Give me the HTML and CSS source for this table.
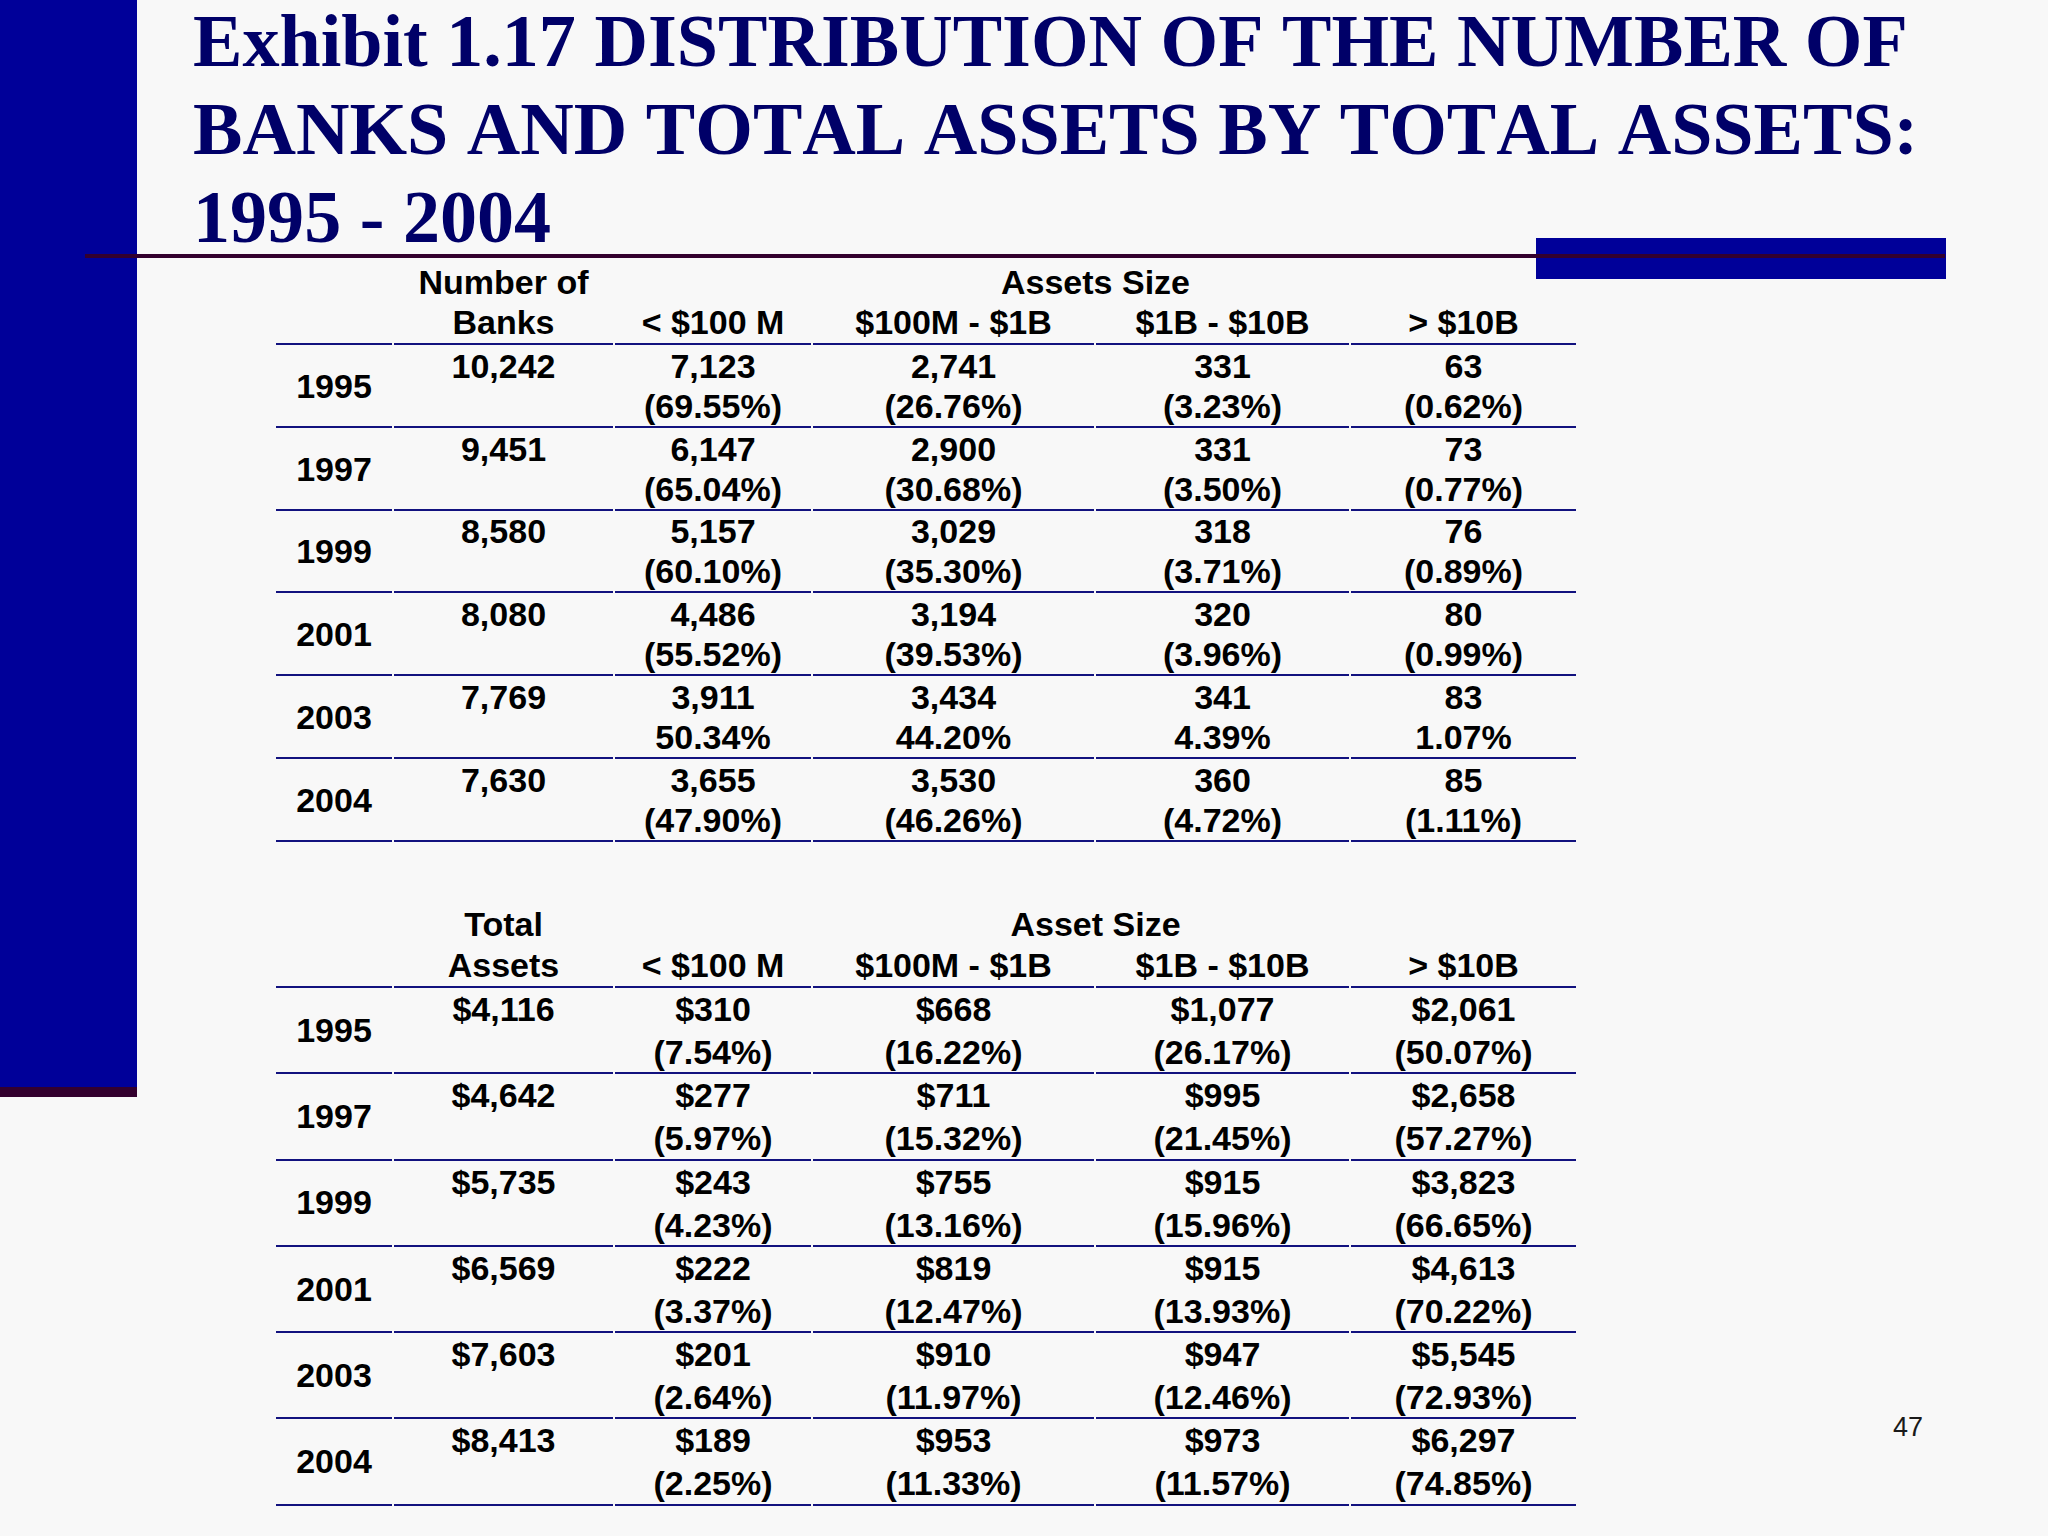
FILE: index.html
```html
<!DOCTYPE html>
<html>
<head>
<meta charset="utf-8">
<link rel="stylesheet" href="styles.css">
</head>
<body>
<div class="slide">
  <div class="side-bar"></div>
  <div class="accent-block"></div>
  <div class="rule"></div>
  <div class="content">
    <h1 class="title">Exhibit 1.17 DISTRIBUTION OF THE NUMBER OF<br>BANKS AND TOTAL ASSETS BY TOTAL ASSETS:<br>1995 - 2004</h1>

    <div class="table t1">
      <div class="hc year-h"></div>
      <div class="hc lead-h">Number of<br>Banks</div>
      <div class="group-h">Assets Size</div>
      <div class="hc sub-h">&lt; $100 M</div>
      <div class="hc sub-h">$100M - $1B</div>
      <div class="hc sub-h">$1B - $10B</div>
      <div class="hc sub-h">&gt; $10B</div>

      <div class="c yr">1995</div><div class="c">10,242</div><div class="c">7,123<br>(69.55%)</div><div class="c">2,741<br>(26.76%)</div><div class="c">331<br>(3.23%)</div><div class="c">63<br>(0.62%)</div>
      <div class="c yr">1997</div><div class="c">9,451</div><div class="c">6,147<br>(65.04%)</div><div class="c">2,900<br>(30.68%)</div><div class="c">331<br>(3.50%)</div><div class="c">73<br>(0.77%)</div>
      <div class="c yr">1999</div><div class="c">8,580</div><div class="c">5,157<br>(60.10%)</div><div class="c">3,029<br>(35.30%)</div><div class="c">318<br>(3.71%)</div><div class="c">76<br>(0.89%)</div>
      <div class="c yr">2001</div><div class="c">8,080</div><div class="c">4,486<br>(55.52%)</div><div class="c">3,194<br>(39.53%)</div><div class="c">320<br>(3.96%)</div><div class="c">80<br>(0.99%)</div>
      <div class="c yr">2003</div><div class="c">7,769</div><div class="c">3,911<br>50.34%</div><div class="c">3,434<br>44.20%</div><div class="c">341<br>4.39%</div><div class="c">83<br>1.07%</div>
      <div class="c yr">2004</div><div class="c">7,630</div><div class="c">3,655<br>(47.90%)</div><div class="c">3,530<br>(46.26%)</div><div class="c">360<br>(4.72%)</div><div class="c">85<br>(1.11%)</div>
    </div>

    <div class="table t2">
      <div class="hc year-h"></div>
      <div class="hc lead-h">Total<br>Assets</div>
      <div class="group-h">Asset Size</div>
      <div class="hc sub-h">&lt; $100 M</div>
      <div class="hc sub-h">$100M - $1B</div>
      <div class="hc sub-h">$1B - $10B</div>
      <div class="hc sub-h">&gt; $10B</div>

      <div class="c yr">1995</div><div class="c">$4,116</div><div class="c">$310<br>(7.54%)</div><div class="c">$668<br>(16.22%)</div><div class="c">$1,077<br>(26.17%)</div><div class="c">$2,061<br>(50.07%)</div>
      <div class="c yr">1997</div><div class="c">$4,642</div><div class="c">$277<br>(5.97%)</div><div class="c">$711<br>(15.32%)</div><div class="c">$995<br>(21.45%)</div><div class="c">$2,658<br>(57.27%)</div>
      <div class="c yr">1999</div><div class="c">$5,735</div><div class="c">$243<br>(4.23%)</div><div class="c">$755<br>(13.16%)</div><div class="c">$915<br>(15.96%)</div><div class="c">$3,823<br>(66.65%)</div>
      <div class="c yr">2001</div><div class="c">$6,569</div><div class="c">$222<br>(3.37%)</div><div class="c">$819<br>(12.47%)</div><div class="c">$915<br>(13.93%)</div><div class="c">$4,613<br>(70.22%)</div>
      <div class="c yr">2003</div><div class="c">$7,603</div><div class="c">$201<br>(2.64%)</div><div class="c">$910<br>(11.97%)</div><div class="c">$947<br>(12.46%)</div><div class="c">$5,545<br>(72.93%)</div>
      <div class="c yr">2004</div><div class="c">$8,413</div><div class="c">$189<br>(2.25%)</div><div class="c">$953<br>(11.33%)</div><div class="c">$973<br>(11.57%)</div><div class="c">$6,297<br>(74.85%)</div>
    </div>
  </div>
  <div class="page-num">47</div>
</div>
</body>
</html>
```

FILE: styles.css
```css
html, body {
  margin: 0;
  padding: 0;
  background: #f8f8f8;
}

.slide {
  position: relative;
  width: 2048px;
  height: 1536px;
  overflow: hidden;
  background: #f8f8f8;
}

.side-bar {
  position: absolute;
  left: 0;
  top: 0;
  width: 137px;
  height: 1087px;
  background: #000099;
  border-bottom: 10px solid #33002e;
}

.accent-block {
  position: absolute;
  left: 1536px;
  top: 238px;
  width: 410px;
  height: 41px;
  background: #000099;
}

.rule {
  position: absolute;
  left: 85px;
  top: 254px;
  width: 1860px;
  height: 4px;
  background: #33002e;
}

.content {
  position: relative;
  padding-left: 193px;
}

.title {
  margin: -3px 0 0 0;
  font-family: "Liberation Serif", "Times New Roman", serif;
  font-weight: bold;
  font-size: 74.1px;
  line-height: 88px;
  color: #000068;
  white-space: nowrap;
  font-kerning: none;
}

.table {
  display: grid;
  grid-template-columns: 116px 219px 196px 281px 253px 225px;
  column-gap: 2px;
  margin-left: 83px;
  font-family: "Liberation Sans", Arial, sans-serif;
  font-weight: bold;
  font-size: 34px;
  color: #000;
  text-align: center;
}

.t1 {
  margin-top: 1px;
  line-height: 40px;
}

.t2 {
  margin-top: 62px;
  line-height: 41px;
  grid-template-rows: 41px 43px;
  grid-auto-rows: 86.3px;
}

.hc {
  border-bottom: 2px solid #12127f;
}

.year-h,
.lead-h {
  grid-row: 1 / span 2;
}

.t1 .year-h,
.t1 .lead-h,
.t1 .sub-h {
  padding-bottom: 1px;
}

.group-h {
  grid-column: 3 / span 4;
  grid-row: 1;
}

.sub-h {
  grid-row: 2;
}

.c {
  border-bottom: 2px solid #12127f;
}

.t1 .c {
  padding-top: 0.83px;
}

.t2 .c {
  box-sizing: border-box;
  line-height: 43px;
  padding: 0;
  min-height: 0;
}

.c.yr {
  display: flex;
  align-items: center;
  justify-content: center;
}

.page-num {
  position: absolute;
  left: 1893px;
  top: 1414px;
  font-family: "Liberation Sans", Arial, sans-serif;
  font-size: 27px;
  line-height: 27px;
  color: #1a1a1a;
}
```
